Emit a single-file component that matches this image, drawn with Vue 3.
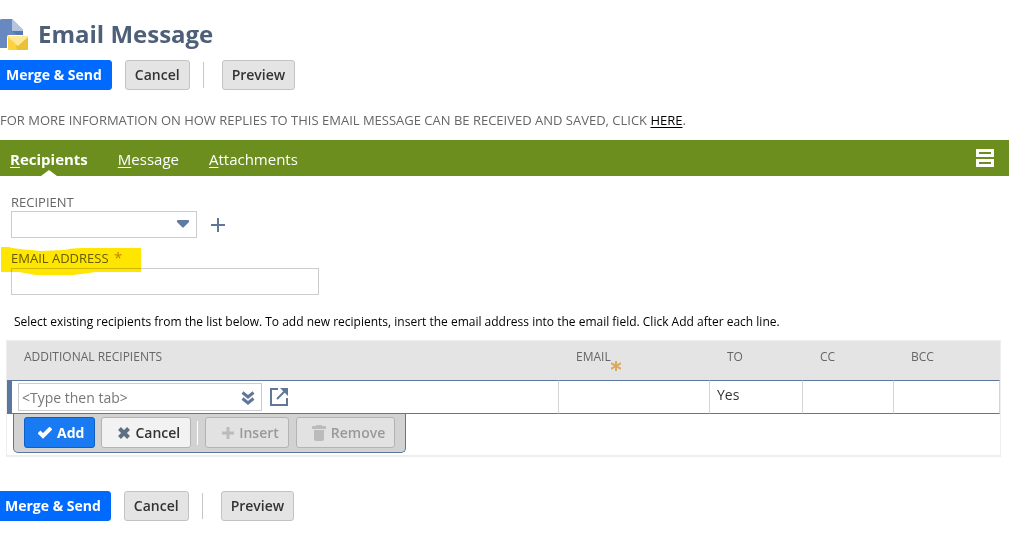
<script setup>
import { ref } from 'vue'

const tabs = [
  { name: 'Recipients', active: true },
  { name: 'Message', active: false },
  { name: 'Attachments', active: false },
]
const recipient = ref('')
const email = ref('')
const additional = ref('')
</script>

<template>
  <main class="page">
    <header class="title">
      <svg class="title-icon" width="30" height="34" viewBox="0 0 30 34" aria-hidden="true">
        <path d="M0 1q0-1 2-1h10l11 11v18H0z" fill="#6888c2" />
        <path d="M12 0l11 11v1H12z" fill="#b5c4df" />
        <path d="M12 12h11v9z" fill="#5577b2" />
        <rect x="7" y="16" width="22" height="17" rx="2" fill="#fff" />
        <rect x="8" y="17" width="20" height="14" rx="1" fill="#ffd23c" />
        <path d="M28 18v12l-1 1H17l-1-4z" fill="#e8c136" />
        <path d="M8 18q0-1 1-1h18q1 0 1 1L18 27z" fill="#ffe896" />
      </svg>
      <h1>Email Message</h1>
    </header>

    <div class="actions top">
      <button class="btn primary" type="button">Merge &amp; Send</button>
      <button class="btn" type="button">Cancel</button>
      <span class="divider"></span>
      <button class="btn" type="button">Preview</button>
    </div>

    <p class="info">FOR MORE INFORMATION ON HOW REPLIES TO THIS EMAIL MESSAGE CAN BE RECEIVED AND SAVED, CLICK <a href="#">HERE</a>.</p>

    <nav class="tabs">
      <a v-for="tab in tabs" :key="tab.name" href="#" class="tab" :class="{ active: tab.active }"><span><u>{{ tab.name[0] }}</u>{{ tab.name.slice(1) }}</span></a>
      <button class="layout" type="button" aria-label="Toggle layout">
        <svg width="20" height="20" viewBox="0 0 20 20" fill="none" stroke="#fff" stroke-width="3">
          <rect x="2.5" y="2.5" width="15" height="5" />
          <rect x="2.5" y="12.5" width="15" height="5" />
        </svg>
      </button>
    </nav>

    <section class="form">
      <label for="recipient">RECIPIENT</label>
      <div class="recipient-row">
        <div class="combo">
          <input id="recipient" v-model="recipient" type="text" />
          <svg width="14" height="10" viewBox="0 0 14 10" aria-hidden="true"><path d="M1.500 1h11q1.500 1 0 2.500L8 8q-1 1-2 0L1.500 3.500Q0 2 1.500 1z" fill="#5f7ba2" /></svg>
        </div>
        <button class="plain" type="button" aria-label="Add recipient">
          <svg width="14" height="14" viewBox="0 0 14 14" stroke="#5f7899" stroke-width="2"><path d="M7 0v14M0 7h14" /></svg>
        </button>
      </div>
      <div class="email-field">
        <label for="email">EMAIL ADDRESS <span class="required">*</span></label>
        <input id="email" v-model="email" type="text" />
        <svg class="marker" width="141" height="28" viewBox="0 0 141 28" aria-hidden="true">
          <path d="M1 0h8c9 3 20 2 31 4c9 0 16-1 24-1c9-2 16-2 25-2h52v24H96c-11 1-18 3-27 3H36c-9-1-13-3-20-3H1z" fill="#ffe600" />
        </svg>
      </div>
    </section>

    <p class="hint">Select existing recipients from the list below. To add new recipients, insert the email address into the email field. Click Add after each line.</p>

    <section class="list">
      <table>
        <colgroup><col /><col class="c-email" /><col class="c-to" /><col class="c-cc" /><col class="c-bcc" /></colgroup>
        <thead>
          <tr>
            <th>ADDITIONAL RECIPIENTS</th>
            <th><span class="email-head">EMAIL<svg width="10" height="12" viewBox="0 0 10 12" stroke="#d9a95c" stroke-width="2" aria-label="required"><path d="M5 1v10M0 3l10 6M10 3L0 9" /></svg></span></th>
            <th>TO</th>
            <th>CC</th>
            <th>BCC</th>
          </tr>
        </thead>
        <tbody>
          <tr>
            <td>
              <div class="entry">
                <div class="combo wide">
                  <input v-model="additional" type="text" placeholder="&lt;Type then tab&gt;" aria-label="Additional recipients" />
                  <svg width="14" height="14" viewBox="0 0 14 14" fill="none" stroke="#5f7899" stroke-width="3" aria-hidden="true"><path d="M1.500 1.500L7 6l5.500-4.500M1.500 7.500L7 12l5.500-4.500" /></svg>
                </div>
                <button class="plain" type="button" aria-label="Open record">
                  <svg width="18" height="18" viewBox="0 0 18 18" fill="none" stroke="#5f7899" stroke-width="2"><path d="M8 1H1v16h16v-7M7 11l8-8" /><path d="M10 0h8v8z" fill="#5f7899" stroke="none" /></svg>
                </button>
              </div>
            </td>
            <td></td>
            <td class="value">Yes</td>
            <td></td>
            <td></td>
          </tr>
        </tbody>
      </table>
      <div class="row-tools">
        <button class="tool add" type="button">
          <svg width="14" height="12" viewBox="0 0 14 12" fill="none" stroke="#fff" stroke-width="4"><path d="M1 5l4 4 8-8" /></svg>Add
        </button>
        <button class="tool cancel" type="button">
          <svg width="12" height="12" viewBox="0 0 12 12" stroke="#5f6f83" stroke-width="4"><path d="M1.500 1.500l9 9M10.500 1.500l-9 9" /></svg>Cancel
        </button>
        <span class="tool-divider"></span>
        <button class="tool insert" type="button" disabled>
          <svg width="12" height="12" viewBox="0 0 12 12" stroke="#bbb" stroke-width="3"><path d="M6 0v12M0 6h12" /></svg>Insert
        </button>
        <button class="tool remove" type="button" disabled>
          <svg width="14" height="16" viewBox="0 0 14 16" fill="#bbb"><path d="M0 2q0-1 1-1h3q0-1 1-1h4q1 0 1 1h3q1 0 1 1v2H0zM2 5h10v9q0 2-2 2H4q-2 0-2-2z" /></svg>Remove
        </button>
      </div>
    </section>

    <div class="actions bottom">
      <button class="btn primary" type="button">Merge &amp; Send</button>
      <button class="btn" type="button">Cancel</button>
      <span class="divider"></span>
      <button class="btn" type="button">Preview</button>
    </div>
  </main>
</template>

<style>
body { background: #fff; }
</style>

<style scoped>
* { box-sizing: border-box; }
.page {
  overflow: hidden;
  font-family: "Open Sans", "Noto Sans", sans-serif;
  font-size: 14px;
  color: #333;
}
button, input { font: inherit; color: inherit; margin: 0; }
svg { display: block; flex: none; }
.title { display: flex; align-items: center; gap: 8px; padding-top: 16px; height: 52px; }
h1 { margin: 0; font-size: 24px; line-height: 32px; font-weight: 700; color: #4d5f79; }
.title-icon { margin-top: 4px; }

.actions { display: flex; align-items: center; height: 30px; }
.actions.top { margin: 8px 0 0 -5px; }
.actions.bottom { margin: 34px 0 0 -6px; }
.btn {
  height: 30px;
  padding: 0 9px;
  border: 1px solid #c3c3c3;
  border-radius: 3px;
  background: #e4e4e4;
  font-weight: 600;
  line-height: 20px;
}
.btn.primary { margin-right: 13px; padding: 0 9px 0 10px; border-color: #006aff; background: #006aff; color: #fff; font-weight: 700; }
.divider { width: 1px; height: 26px; margin: 0 18px 0 13px; background: #c6c6c6; }

.info { margin: 20px 0 10px; font-size: 13px; line-height: 20px; color: #666; white-space: nowrap; }
.info a { color: #000; text-underline-offset: 2px; }

.tabs { display: flex; align-items: center; gap: 30px; height: 36px; padding: 0 14px 0 10px; background: #6b8e1f; }
.tab { position: relative; display: flex; align-items: center; height: 36px; padding-top: 2px; color: #fff; font-size: 15px; line-height: 20px; text-decoration: none; }
.tab u { text-underline-offset: 2px; }
.tab.active { font-weight: 700; }
.tab.active::after {
  content: "";
  position: absolute;
  left: 50%;
  bottom: 0;
  margin-left: -8px;
  border: 8px solid transparent;
  border-top: 0;
  border-bottom: 6px solid #fff;
}
.layout { margin-left: auto; padding: 0; border: 0; background: none; }

.form { padding: 18px 11px 0; }
label { display: block; font-size: 13px; line-height: 17px; color: #666; }
input { height: 27px; padding: 0 3px; border: 1px solid #ccc; border-radius: 0; background: #fff; outline: 0; }
.recipient-row { display: flex; align-items: center; gap: 14px; }
.combo { position: relative; width: 186px; }
.combo input { display: block; width: 100%; }
.combo svg { position: absolute; right: 7px; top: 8px; }
.plain { padding: 0; border: 0; background: none; }
.email-field { position: relative; margin-top: 11px; }
.email-field input { display: block; width: 308px; margin-top: 1px; }
.required { margin-left: 2px; font-size: 15px; line-height: 16px; color: #c98a28; }
.marker { position: absolute; left: -11px; top: -2px; mix-blend-mode: multiply; pointer-events: none; }

.hint { margin: 18px 14px 10px; font-size: 12px; line-height: 17px; color: #000; }

.list { margin: 0 8px 0 6px; border: 1px solid #eee; border-bottom-width: 2px; height: 117px; }
table { width: 100%; border-collapse: separate; border-spacing: 0; table-layout: fixed; }
.c-email { width: 151px; }
.c-to { width: 93px; }
.c-cc { width: 91px; }
.c-bcc { width: 106px; }
th { height: 39px; padding: 7px 17px; background: #e4e4e4; font-size: 12px; line-height: 17px; font-weight: 400; color: #666; text-align: left; vertical-align: top; }
.email-head { display: flex; }
.email-head svg { margin-top: 12px; }
td { height: 34px; padding: 0; border-top: 1px solid #5b769f; border-bottom: 1px solid #5b769f; border-right: 1px solid #d5d5d5; vertical-align: top; }
td:first-child { border-left: 5px solid #5b769f; }
.value { padding: 4px 7px; line-height: 20px; }
.entry { display: flex; align-items: center; gap: 8px; padding: 2px 6px; }
.wide { width: 244px; }
.wide input { height: 28px; }
.wide input::placeholder { color: #777; opacity: 1; }

.row-tools {
  display: flex;
  width: max-content;
  margin-left: 6px;
  padding: 3px 10px 4px;
  border: 1px solid #5b769f;
  border-top: 0;
  border-radius: 0 0 5px 5px;
  background: #d2d2d2;
}
.tool { display: flex; align-items: center; gap: 5px; height: 31px; padding: 0 9px 0 13px; border: 1px solid #b3b3b3; border-radius: 3px; background: #f2f2f2; font-weight: 600; line-height: 20px; }
.tool.add { margin-right: 6px; padding-right: 10px; border-color: #0f5fc4; background: #1a7af2; color: #fff; font-weight: 700; }
.tool.cancel { padding: 0 10px 0 16px; }
.tool:disabled { background: #e2e2e2; color: #999; }
.tool-divider { width: 1px; height: 24px; margin: 4px 7px 0 6px; background: #fff; }
.tool.insert { margin-right: 7px; padding: 0 9px 0 16px; }
.tool.remove { padding-left: 15px; }
</style>
